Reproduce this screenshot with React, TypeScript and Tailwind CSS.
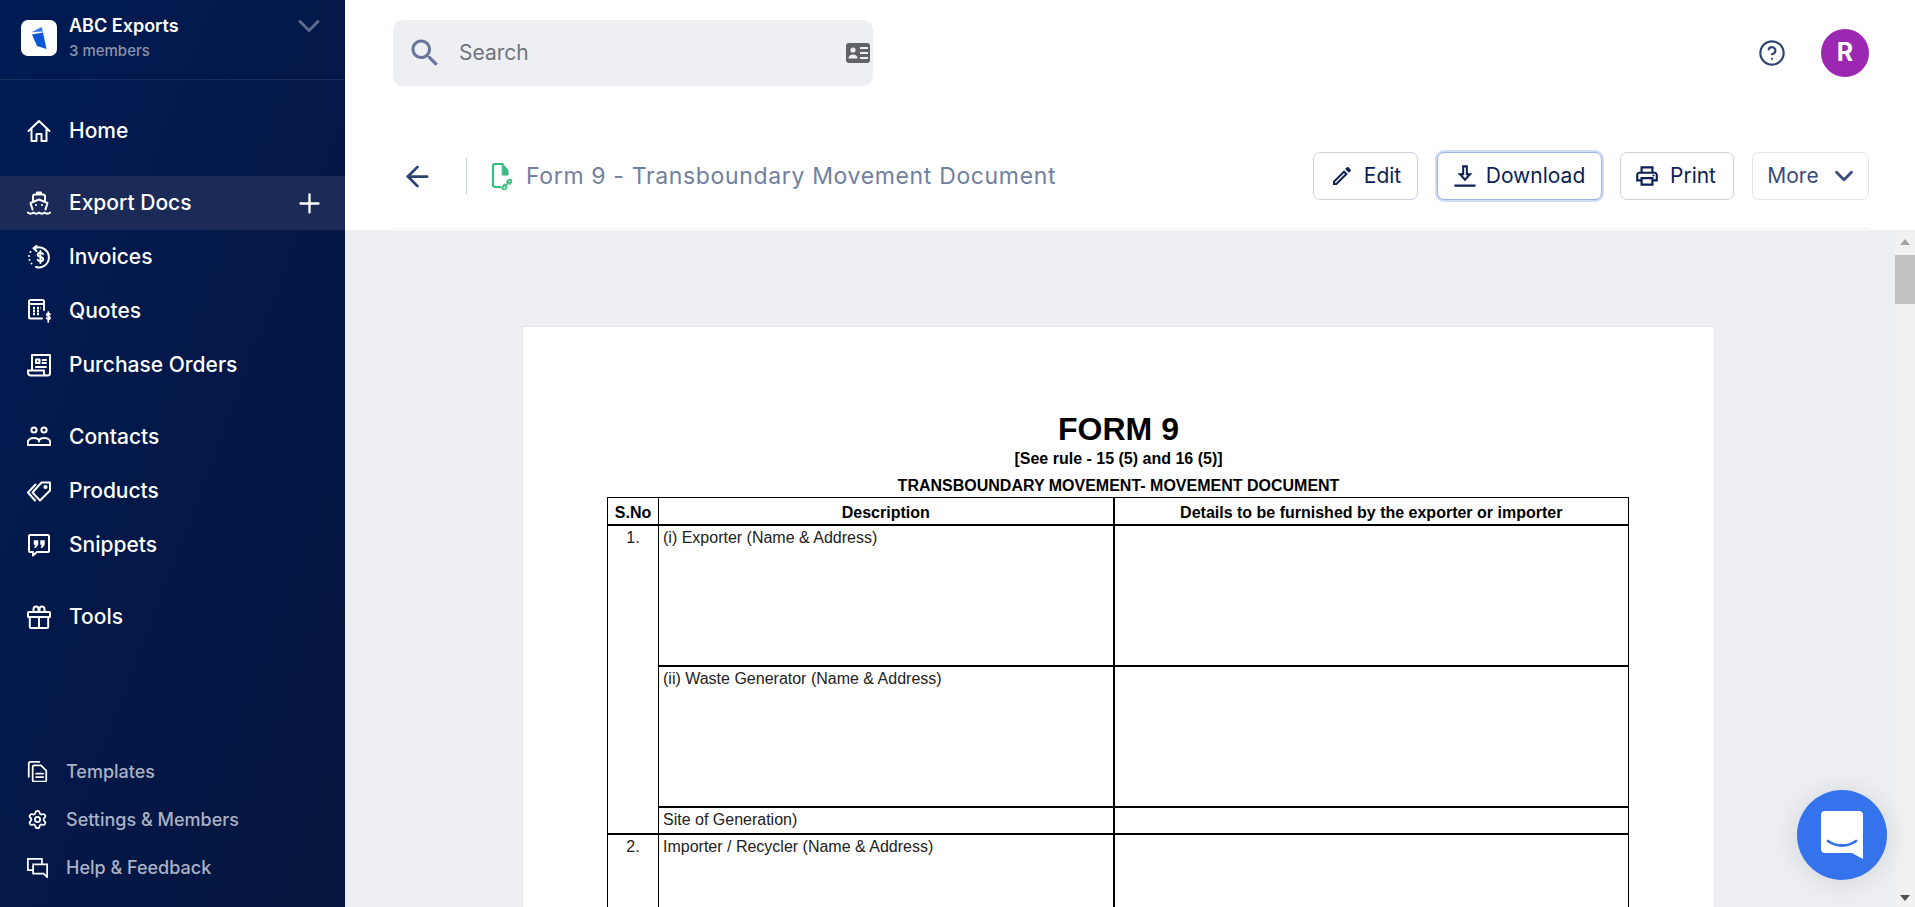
import { ReactNode } from "react";
import { ChevronDown, Plus, ArrowLeft, CircleHelp, Settings } from "lucide-react";

type IconProps = { className?: string };

const Svg = ({ className, children }: IconProps & { children: ReactNode }) => (
  <svg viewBox="0 0 24 24" fill="none" stroke="currentColor" strokeWidth={2} strokeLinecap="round" strokeLinejoin="round" className={className}>
    {children}
  </svg>
);

const Filled = ({ className, d }: IconProps & { d: string }) => (
  <svg viewBox="0 0 24 24" fill="currentColor" className={className}>
    <path d={d} />
  </svg>
);

const HomeIcon = ({ className }: IconProps) => (
  <Svg className={className}>
    <path d="M1.500 12 12 2l10.500 10M4.500 10v12h5v-7h5v7h5V10" />
  </Svg>
);

const ShipIcon = ({ className }: IconProps) => (
  <Svg className={className}>
    <path d="M10 3.500V1.500h4v2M6 9.500V5.500a2 2 0 0 1 2-2h8a2 2 0 0 1 2 2v4" />
    <path d="M5.500 18.500 3.500 12 12 8.500l8.500 3.500-2 6.500" />
    <path d="M.8 21.500c2 1.600 3.600 1.600 5.600 0 2 1.600 3.600 1.600 5.600 0 2 1.600 3.600 1.600 5.600 0 2 1.600 3.600 1.600 5.600 0" />
    <path d="M9 14h.01M15 14h.01" />
  </Svg>
);

const InvoiceIcon = ({ className }: IconProps) => (
  <Svg className={className}>
    <path d="M8.500 3A10 10 0 1 1 9 22" />
    <path d="M9.500.8 6.500 3.300 9.500 6" />
    <path d="M3.500 7h.01M2 11h.01M2.500 15h.01M4.500 18.500h.01" />
    <path d="M16 9c-.5-.9-1.500-1.300-2.600-1.300-1.500 0-2.600.8-2.600 2 0 2.900 5.300 1.400 5.300 4.300 0 1.300-1.200 2.200-2.700 2.200-1.200 0-2.200-.5-2.700-1.400M13.400 6v12" />
  </Svg>
);

const QuoteIcon = ({ className }: IconProps) => (
  <Svg className={className}>
    <path d="M15 19.500H3.500A1.500 1.500 0 0 1 2 18V2.500A1.500 1.500 0 0 1 3.500 1h12A1.500 1.500 0 0 1 17 2.500V11" />
    <path d="M2 5h15" />
    <path d="M6 9h2M10 9h2M6 12h2M10 12h2M6 15h2M10 15h2M13.500 9h.5" strokeWidth={2.400} strokeLinecap="butt" />
    <path d="M23 15.500c-.4-.7-1-1-1.700-1-1 0-1.700.5-1.700 1.300 0 1.900 3.500.9 3.500 2.900 0 .9-.8 1.500-1.800 1.500-.8 0-1.500-.4-1.800-1M21.300 13v10" strokeWidth={1.700} />
  </Svg>
);

const OrderIcon = ({ className }: IconProps) => (
  <Svg className={className}>
    <path d="M5 17.500V2h18v18a2.500 2.500 0 0 1-2.500 2.500H4A3 3 0 0 1 1 19.500v-2h16v2.500a2.500 2.500 0 0 0 2.500 2.500" />
    <path d="M9 6.500h3.500V10H9zM15.500 7H19M15.500 10H19M9 14h10" />
  </Svg>
);

const ContactsIcon = ({ className }: IconProps) => (
  <Svg className={className}>
    <circle cx="7" cy="5" r="2.600" />
    <circle cx="17" cy="5" r="2.600" />
    <path d="M.8 20h22.400v-3c0-2.500-3-4-6.200-4-2.200 0-4 .8-5 2-1-1.200-2.800-2-5-2C3.800 13 .8 14.500.8 17z" />
    <path d="M12 15v1.500" />
  </Svg>
);

const TagsIcon = ({ className }: IconProps) => (
  <Svg className={className}>
    <path d="M23 3.500v8L13 21.500 5.500 13.500 14.500 3.500z" />
    <path d="M8.500 5.500 1 13.500l7 8" />
    <circle cx="18.500" cy="8" r="1.100" />
  </Svg>
);

const SnippetIcon = ({ className }: IconProps) => (
  <svg viewBox="0 0 24 24" fill="none" stroke="currentColor" strokeWidth={2} strokeLinejoin="round" className={className}>
    <path d="M3 2h18a1 1 0 0 1 1 1v15a1 1 0 0 1-1 1H10l-4 3.500V19H3a1 1 0 0 1-1-1V3a1 1 0 0 1 1-1z" />
    <path d="M7 7.500h4v4l-2 3H7.500l1-3H7zM13.500 7.500h4v4l-2 3H14l1-3h-1.500z" fill="currentColor" strokeWidth={0.500} />
  </svg>
);

const GiftIcon = ({ className }: IconProps) => (
  <Svg className={className}>
    <rect x="1" y="7" width="22" height="5" rx="0.500" />
    <path d="M2.800 12v10a1 1 0 0 0 1 1h16.400a1 1 0 0 0 1-1V12M12 12v11" />
    <path d="M6.500 7V4a2.500 2.500 0 0 1 5 0v3M12.500 7V4a2.500 2.500 0 0 1 5 0v3" />
  </Svg>
);

const TemplateIcon = ({ className }: IconProps) => (
  <Svg className={className}>
    <path d="M2 18V3a2 2 0 0 1 2-2h10" />
    <path d="M8 5h8l6 6v11a1.500 1.500 0 0 1-1.500 1.500H8A1.500 1.500 0 0 1 6.500 22V6.500A1.500 1.500 0 0 1 8 5zM10.500 14.500h8M10.500 18.500h8" />
  </Svg>
);

const FeedbackIcon = ({ className }: IconProps) => (
  <svg viewBox="0 0 24 24" fill="none" stroke="currentColor" strokeWidth={2} strokeLinejoin="miter" className={className}>
    <path d="M17 8.500V2H1v13h6" />
    <path d="M7 8.500h16V23l-4-4H7z" />
  </svg>
);

const SearchIcon = ({ className }: IconProps) => (
  <Filled
    className={className}
    d="M15.500 14h-.79l-.28-.27C15.410 12.590 16 11.110 16 9.500 16 5.910 13.090 3 9.500 3S3 5.910 3 9.500 5.910 16 9.500 16c1.610 0 3.090-.59 4.230-1.570l.27.28v.79l5 4.990L20.490 19l-4.990-5zm-6 0C7.010 14 5 11.990 5 9.500S7.010 5 9.500 5 14 7.010 14 9.500 11.990 14 9.500 14z"
  />
);

const EditIcon = ({ className }: IconProps) => (
  <Filled
    className={className}
    d="M14.060 9.020l.92.92L5.920 19H5v-.92l9.060-9.060M17.660 3c-.25 0-.51.1-.7.29l-1.830 1.830 3.750 3.750 1.830-1.830c.39-.39.39-1.020 0-1.410l-2.340-2.340c-.2-.2-.45-.29-.71-.29zm-3.600 3.190L3 17.250V21h3.750L17.810 9.940l-3.750-3.750z"
  />
);

const PrintIcon = ({ className }: IconProps) => (
  <Filled
    className={className}
    d="M19 8h-1V3H6v5H5c-1.660 0-3 1.340-3 3v6h4v4h12v-4h4v-6c0-1.660-1.340-3-3-3zM8 5h8v3H8V5zm8 12v2H8v-4h8v2zm2-2v-2H6v2H4v-4c0-.55.45-1 1-1h14c.55 0 1 .45 1 1v4h-2zm0-4.500a1 1 0 1 0 0 2 1 1 0 0 0 0-2z"
  />
);

const ContactCardIcon = ({ className }: IconProps) => (
  <svg viewBox="0 0 24 20" className={className}>
    <rect width="24" height="20" rx="3" fill="#5f6368" />
    <circle cx="7" cy="7" r="2.600" fill="#edeff3" />
    <path d="M2.500 15.500c0-2.600 2-4 4.500-4s4.500 1.400 4.500 4z" fill="#edeff3" />
    <path d="M14 5h8M14 10h8M14 15h8" stroke="#edeff3" strokeWidth={1.800} />
  </svg>
);

const LinkFileIcon = ({ className }: IconProps) => (
  <svg viewBox="0 0 20 27" fill="none" stroke="#34bd82" strokeWidth={2.200} strokeLinecap="round" strokeLinejoin="round" className={className}>
    <path d="M8.500 24H3a2 2 0 0 1-2-2V3a2 2 0 0 1 2-2h7.500" />
    <path d="M10.500 1 16 7v5h-5.500z" fill="#34bd82" strokeWidth={1} />
    <path d="M12.500 21.500 10.800 24a1.700 1.700 0 0 0 2.800 2l1.200-1.800M15 19l1.500-2a1.700 1.700 0 0 1 2.600 2l-1.300 2M13.500 23l3-3.500" strokeWidth={1.800} />
  </svg>
);

const DownloadIcon = ({ className }: IconProps) => (
  <svg viewBox="0 0 24 24" fill="none" stroke="currentColor" strokeWidth={2.200} strokeLinejoin="miter" className={className}>
    <path d="M10 1.500h4v8.500h3.500L12 16 6.500 10H10zM.5 22.500h23" />
  </svg>
);

const mainNav: { label: string; icon: (p: IconProps) => ReactNode; gap?: boolean; active?: boolean }[] = [
  { label: "Home", icon: HomeIcon },
  { label: "Export Docs", icon: ShipIcon, gap: true, active: true },
  { label: "Invoices", icon: InvoiceIcon },
  { label: "Quotes", icon: QuoteIcon },
  { label: "Purchase Orders", icon: OrderIcon },
  { label: "Contacts", icon: ContactsIcon, gap: true },
  { label: "Products", icon: TagsIcon },
  { label: "Snippets", icon: SnippetIcon },
  { label: "Tools", icon: GiftIcon, gap: true },
];

const footerNav = [
  { label: "Templates", icon: TemplateIcon },
  { label: "Settings & Members", icon: ({ className }: IconProps) => <Settings className={className} strokeWidth={2} /> },
  { label: "Help & Feedback", icon: FeedbackIcon },
];

function Sidebar() {
  return (
    <aside className="w-[345px] shrink-0 h-full flex flex-col bg-gradient-to-br from-[#001b54] to-[#05153d] text-white">
      <div className="h-[80px] shrink-0 border-b border-[#1b2b59] pl-[21px] pr-[18px] pt-[20px] flex items-start gap-3">
        <div className="w-9 h-9 rounded-[7px] bg-white flex items-center justify-center">
          <svg viewBox="0 0 16 24" className="w-[16px] h-[24px]">
            <path d="M1 6 10.500 1l1.500 4.500z" fill="#2a7ae8" />
            <path d="M1 8.500 12 6.500 15.500 23 6 20z" fill="#0c56d8" />
          </svg>
        </div>
        <div className="flex-1 -mt-[7px]">
          <div className="text-[18px] leading-[26px] font-semibold">ABC Exports</div>
          <div className="text-[15px] leading-[20px] mt-[2px] font-medium text-[#8a93ac]">3 members</div>
        </div>
        <ChevronDown className="w-9 h-9 -mt-[12px] text-[#5d6a8c]" strokeWidth={2} />
      </div>
      <nav className="pt-[24px]">
        {mainNav.map((item) => (
          <div key={item.label} className={`${item.gap ? "mt-[18px]" : ""} ${item.active ? "bg-[#1b2a56]" : ""} h-[54px] flex items-center pl-[27px] pr-[20px] gap-[18px]`}>
            <item.icon className="w-6 h-6 shrink-0" />
            <span className="flex-1 text-[21px] font-medium">{item.label}</span>
            {item.active && <Plus className="w-[31px] h-[31px]" strokeWidth={1.8} />}
          </div>
        ))}
      </nav>
      <div className="mt-auto pb-[16px]">
        {footerNav.map((item) => (
          <div key={item.label} className="h-[48px] flex items-center pl-[27px] gap-[18px] text-[#aab1c5]">
            <item.icon className="w-[21px] h-[21px] shrink-0 text-white" />
            <span className="text-[18px] font-medium">{item.label}</span>
          </div>
        ))}
      </div>
    </aside>
  );
}

function TopBar() {
  return (
    <div className="h-[106px] shrink-0 pl-[48px] pr-[46px] pt-[20px] flex items-start justify-between">
      <div className="w-[480px] h-[66px] rounded-[10px] bg-[#edeff3] flex items-center pl-[14px] pr-[3px]">
        <SearchIcon className="w-9 h-9 text-[#67759b]" />
        <span className="flex-1 ml-[16px] text-[21px] text-[#70757d]">Search</span>
        <ContactCardIcon className="w-6 h-5" />
      </div>
      <div className="flex items-center gap-[35px] pt-[9px]">
        <CircleHelp className="w-[28px] h-[28px] text-[#2c4373]" strokeWidth={1.8} />
        <div className="w-12 h-12 rounded-full bg-[#9c27b0] text-white flex items-center justify-center text-[25px] font-bold">R</div>
      </div>
    </div>
  );
}

const buttonBase = "h-[48px] rounded-[7px] bg-white flex items-center justify-center gap-[10px] text-[21px] border";

function PageHeader() {
  return (
    <div className="h-[124px] shrink-0 pl-[48px] pr-[46px]">
      <div className="h-[123px] border-b border-[#edeff3] flex items-center pt-[18px]">
        <ArrowLeft className="w-[33px] h-[33px] ml-[8px] text-[#2c4373]" strokeWidth={2} />
        <div className="w-px h-9 bg-[#ccd0da] ml-[32px]" />
        <LinkFileIcon className="w-[20px] h-[27px] ml-[25px]" />
        <h1 className="ml-[14px] text-[23px] tracking-[0.65px] text-[#71809f]">Form 9 - Transboundary Movement Document</h1>
        <div className="ml-auto flex items-center text-[#0c1f54]">
          <button className={`${buttonBase} w-[105px] border-[#ccd0dc]`}>
            <EditIcon className="w-6 h-6" />
            Edit
          </button>
          <button className={`${buttonBase} w-[165px] ml-[19px] border-[#9bb3e4] ring-2 ring-[#cfdcf5]`}>
            <DownloadIcon className="w-[22px] h-[22px]" />
            Download
          </button>
          <button className={`${buttonBase} w-[114px] ml-[18px] pr-[4px] border-[#ccd0dc]`}>
            <PrintIcon className="w-[26px] h-[26px]" />
            Print
          </button>
          <button className={`${buttonBase} w-[117px] ml-[18px] pl-[5px] border-[#e2e4ea] text-[#3a4c7a]`}>
            More
            <ChevronDown className="w-[30px] h-[30px]" strokeWidth={2.2} />
          </button>
        </div>
      </div>
    </div>
  );
}

function FormTable() {
  const cell = "border-l border-r border-black border-y-2 align-top text-[16px] leading-[18px] px-1 pt-[3px] text-[#222]";
  const mid = `${cell} !border-r-2`;
  const head = "border-l border-r border-black border-t border-b-2 text-[16px] leading-[18px] pt-[6px] align-top text-black";
  return (
    <table className="w-[1022px] table-fixed border-collapse ml-[84px]">
      <colgroup>
        <col className="w-[51px]" />
        <col className="w-[455px]" />
        <col />
      </colgroup>
      <tbody>
        <tr className="h-[27px] font-bold text-center">
          <td className={head}>S.No</td>
          <td className={`${head} !border-r-2`}>Description</td>
          <td className={head}>Details to be furnished by the exporter or importer</td>
        </tr>
        <tr className="h-[141px]">
          <td rowSpan={3} className={`${cell} text-center`}>1.</td>
          <td className={mid}>(i) Exporter (Name &amp; Address)</td>
          <td className={cell} />
        </tr>
        <tr className="h-[141px]">
          <td className={mid}>(ii) Waste Generator (Name &amp; Address)</td>
          <td className={cell} />
        </tr>
        <tr className="h-[27px]">
          <td className={mid}>Site of Generation)</td>
          <td className={cell} />
        </tr>
        <tr className="h-[141px]">
          <td className={`${cell} text-center`}>2.</td>
          <td className={mid}>Importer / Recycler (Name &amp; Address)</td>
          <td className={cell} />
        </tr>
      </tbody>
    </table>
  );
}

function DocumentView() {
  return (
    <div className="relative flex-1 min-h-0 overflow-hidden bg-[#edeff3] pl-[177px] pt-[96px]">
      <div className="w-[1193px] h-[900px] bg-white border border-[#e2e4e9] pt-[84px] font-['Liberation_Sans',Arial,sans-serif]">
        <div className="text-center text-black font-bold">
          <div className="text-[32px] leading-[36px]">FORM 9</div>
          <div className="text-[16px] leading-[18px] mt-[3px]">[See rule - 15 (5) and 16 (5)]</div>
          <div className="text-[16px] leading-[18px] mt-[9px] mb-[2px]">TRANSBOUNDARY MOVEMENT- MOVEMENT DOCUMENT</div>
        </div>
        <FormTable />
      </div>
      {/* scrollbar */}
      <div className="absolute right-0 top-0 bottom-0 w-5 bg-[#f1f1f1]">
        <div className="mx-auto mt-[9px] w-0 h-0 border-x-[5px] border-x-transparent border-b-[6px] border-b-[#a3a3a3]" />
        <div className="mt-[10px] h-[49px] bg-[#c1c1c1]" />
        <div className="absolute bottom-[6px] left-[5px] w-0 h-0 border-x-[5px] border-x-transparent border-t-[6px] border-t-[#505050]" />
      </div>
    </div>
  );
}

export default function App() {
  return (
    <div className="relative w-[1915px] h-[907px] overflow-hidden flex bg-white font-['Inter',sans-serif]">
      <Sidebar />
      <main className="flex-1 min-w-0 flex flex-col h-full">
        <TopBar />
        <PageHeader />
        <DocumentView />
      </main>
      {/* chat launcher */}
      <div className="absolute left-[1797px] top-[790px] w-[90px] h-[90px] rounded-full bg-[#3573ec] shadow-[0_2px_30px_rgba(0,0,0,0.12)] flex items-center justify-center">
        <svg viewBox="0 0 42 48" className="w-[42px] h-[48px]">
          <path d="M4 0h34a4 4 0 0 1 4 4v44l-11-6H4a4 4 0 0 1-4-4V4a4 4 0 0 1 4-4z" fill="#fff" />
          <path d="M7 30c8 6 20 6 28 0" fill="none" stroke="#3573ec" strokeWidth={2.800} strokeLinecap="round" />
        </svg>
      </div>
    </div>
  );
}
